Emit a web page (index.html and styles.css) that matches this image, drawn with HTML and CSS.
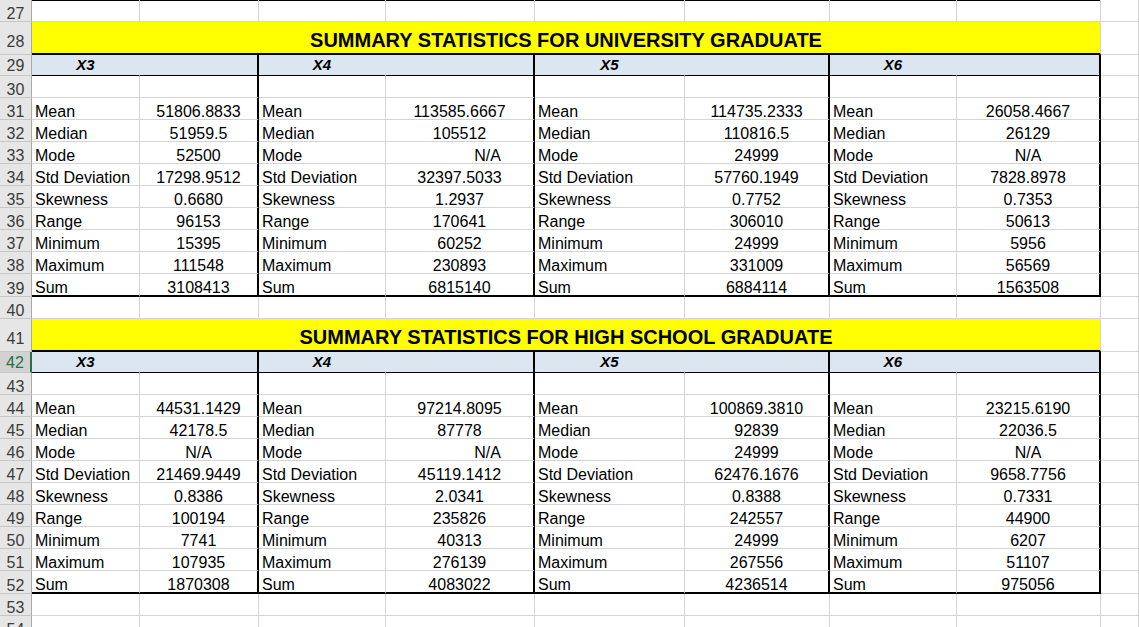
FILE: index.html
```html
<!DOCTYPE html>
<html>
<head>
<meta charset="utf-8">
<title>Summary Statistics</title>
<link rel="stylesheet" href="styles.css">
</head>
<body>
<div class="sheet">
  <div class="row top"><div class="rh">27</div><div class="c"></div><div class="c"></div><div class="c"></div><div class="c"></div><div class="c"></div><div class="c"></div><div class="c"></div><div class="c"></div><div class="x"></div></div>
  <div class="row tall"><div class="rh">28</div><div class="tt">SUMMARY STATISTICS FOR UNIVERSITY GRADUATE</div><div class="x"></div></div>
  <div class="row hd"><div class="rh">29</div><div class="xl">X3</div><div class="g"></div><div class="xl">X4</div><div class="g"></div><div class="xl">X5</div><div class="g"></div><div class="xl">X6</div><div class="g"></div><div class="x"></div></div>
  <div class="row"><div class="rh">30</div><div class="c"></div><div class="c g"></div><div class="c"></div><div class="c g"></div><div class="c"></div><div class="c g"></div><div class="c"></div><div class="c g"></div><div class="x"></div></div>
  <div class="row"><div class="rh">31</div><div class="lb">Mean</div><div class="v g">51806.8833</div><div class="lb">Mean</div><div class="v g">113585.6667</div><div class="lb">Mean</div><div class="v g">114735.2333</div><div class="lb">Mean</div><div class="v g">26058.4667</div><div class="x"></div></div>
  <div class="row"><div class="rh">32</div><div class="lb">Median</div><div class="v g">51959.5</div><div class="lb">Median</div><div class="v g">105512</div><div class="lb">Median</div><div class="v g">110816.5</div><div class="lb">Median</div><div class="v g">26129</div><div class="x"></div></div>
  <div class="row"><div class="rh">33</div><div class="lb">Mode</div><div class="v g">52500</div><div class="lb">Mode</div><div class="v g na4">N/A</div><div class="lb">Mode</div><div class="v g">24999</div><div class="lb">Mode</div><div class="v g">N/A</div><div class="x"></div></div>
  <div class="row"><div class="rh">34</div><div class="lb">Std Deviation</div><div class="v g">17298.9512</div><div class="lb">Std Deviation</div><div class="v g">32397.5033</div><div class="lb">Std Deviation</div><div class="v g">57760.1949</div><div class="lb">Std Deviation</div><div class="v g">7828.8978</div><div class="x"></div></div>
  <div class="row"><div class="rh">35</div><div class="lb">Skewness</div><div class="v g">0.6680</div><div class="lb">Skewness</div><div class="v g">1.2937</div><div class="lb">Skewness</div><div class="v g">0.7752</div><div class="lb">Skewness</div><div class="v g">0.7353</div><div class="x"></div></div>
  <div class="row"><div class="rh">36</div><div class="lb">Range</div><div class="v g">96153</div><div class="lb">Range</div><div class="v g">170641</div><div class="lb">Range</div><div class="v g">306010</div><div class="lb">Range</div><div class="v g">50613</div><div class="x"></div></div>
  <div class="row"><div class="rh">37</div><div class="lb">Minimum</div><div class="v g">15395</div><div class="lb">Minimum</div><div class="v g">60252</div><div class="lb">Minimum</div><div class="v g">24999</div><div class="lb">Minimum</div><div class="v g">5956</div><div class="x"></div></div>
  <div class="row"><div class="rh">38</div><div class="lb">Maximum</div><div class="v g">111548</div><div class="lb">Maximum</div><div class="v g">230893</div><div class="lb">Maximum</div><div class="v g">331009</div><div class="lb">Maximum</div><div class="v g">56569</div><div class="x"></div></div>
  <div class="row end"><div class="rh">39</div><div class="lb">Sum</div><div class="v g">3108413</div><div class="lb">Sum</div><div class="v g">6815140</div><div class="lb">Sum</div><div class="v g">6884114</div><div class="lb">Sum</div><div class="v g">1563508</div><div class="x"></div></div>
  <div class="row"><div class="rh">40</div><div class="c"></div><div class="c"></div><div class="c"></div><div class="c"></div><div class="c"></div><div class="c"></div><div class="c"></div><div class="c"></div><div class="x"></div></div>
  <div class="row tall"><div class="rh">41</div><div class="tt">SUMMARY STATISTICS FOR HIGH SCHOOL GRADUATE</div><div class="x"></div></div>
  <div class="row hd"><div class="rh sel">42</div><div class="xl">X3</div><div class="g"></div><div class="xl">X4</div><div class="g"></div><div class="xl">X5</div><div class="g"></div><div class="xl">X6</div><div class="g"></div><div class="x"></div></div>
  <div class="row"><div class="rh">43</div><div class="c"></div><div class="c g"></div><div class="c"></div><div class="c g"></div><div class="c"></div><div class="c g"></div><div class="c"></div><div class="c g"></div><div class="x"></div></div>
  <div class="row"><div class="rh">44</div><div class="lb">Mean</div><div class="v g">44531.1429</div><div class="lb">Mean</div><div class="v g">97214.8095</div><div class="lb">Mean</div><div class="v g">100869.3810</div><div class="lb">Mean</div><div class="v g">23215.6190</div><div class="x"></div></div>
  <div class="row"><div class="rh">45</div><div class="lb">Median</div><div class="v g">42178.5</div><div class="lb">Median</div><div class="v g">87778</div><div class="lb">Median</div><div class="v g">92839</div><div class="lb">Median</div><div class="v g">22036.5</div><div class="x"></div></div>
  <div class="row"><div class="rh">46</div><div class="lb">Mode</div><div class="v g">N/A</div><div class="lb">Mode</div><div class="v g na4">N/A</div><div class="lb">Mode</div><div class="v g">24999</div><div class="lb">Mode</div><div class="v g">N/A</div><div class="x"></div></div>
  <div class="row"><div class="rh">47</div><div class="lb">Std Deviation</div><div class="v g">21469.9449</div><div class="lb">Std Deviation</div><div class="v g">45119.1412</div><div class="lb">Std Deviation</div><div class="v g">62476.1676</div><div class="lb">Std Deviation</div><div class="v g">9658.7756</div><div class="x"></div></div>
  <div class="row"><div class="rh">48</div><div class="lb">Skewness</div><div class="v g">0.8386</div><div class="lb">Skewness</div><div class="v g">2.0341</div><div class="lb">Skewness</div><div class="v g">0.8388</div><div class="lb">Skewness</div><div class="v g">0.7331</div><div class="x"></div></div>
  <div class="row"><div class="rh">49</div><div class="lb">Range</div><div class="v g">100194</div><div class="lb">Range</div><div class="v g">235826</div><div class="lb">Range</div><div class="v g">242557</div><div class="lb">Range</div><div class="v g">44900</div><div class="x"></div></div>
  <div class="row"><div class="rh">50</div><div class="lb">Minimum</div><div class="v g">7741</div><div class="lb">Minimum</div><div class="v g">40313</div><div class="lb">Minimum</div><div class="v g">24999</div><div class="lb">Minimum</div><div class="v g">6207</div><div class="x"></div></div>
  <div class="row"><div class="rh">51</div><div class="lb">Maximum</div><div class="v g">107935</div><div class="lb">Maximum</div><div class="v g">276139</div><div class="lb">Maximum</div><div class="v g">267556</div><div class="lb">Maximum</div><div class="v g">51107</div><div class="x"></div></div>
  <div class="row end"><div class="rh">52</div><div class="lb">Sum</div><div class="v g">1870308</div><div class="lb">Sum</div><div class="v g">4083022</div><div class="lb">Sum</div><div class="v g">4236514</div><div class="lb">Sum</div><div class="v g">975056</div><div class="x"></div></div>
  <div class="row"><div class="rh">53</div><div class="c"></div><div class="c"></div><div class="c"></div><div class="c"></div><div class="c"></div><div class="c"></div><div class="c"></div><div class="c"></div><div class="x"></div></div>
  <div class="row"><div class="rh">54</div><div class="c"></div><div class="c"></div><div class="c"></div><div class="c"></div><div class="c"></div><div class="c"></div><div class="c"></div><div class="c"></div><div class="x"></div></div>
</div>
</body>
</html>
```

FILE: styles.css
```css
html, body {
  margin: 0;
  padding: 0;
  background: #ffffff;
  overflow: hidden;
}

.sheet {
  font-family: "Liberation Sans", Arial, sans-serif;
  font-size: 16px;
  color: #000000;
  width: 1139px;
}

.row {
  display: grid;
  grid-template-columns: 32px 108px 119px 127px 149px 150px 145px 127px 144px 1fr;
  height: 22px;
}

.row > div {
  box-sizing: border-box;
  border-right: 1px solid #d4d4d4;
  border-bottom: 1px solid #d4d4d4;
  display: flex;
  align-items: flex-end;
  line-height: 15px;
  white-space: nowrap;
}

.row.tall { height: 33px; }
.row.hd { height: 21px; }
.row.end { height: 23px; }

.row > .rh {
  background: #e6e6e6;
  border-right: 1px solid #a9a9a9;
  border-bottom: 1px solid #c6c6c6;
  justify-content: center;
  color: #3c3c3c;
  overflow: hidden;
}

.tall > .rh {
  padding-bottom: 5px;
}

.row > .rh.sel {
  background: #d2d2d2;
  color: #217346;
  border-right: 2px solid #217346;
}

.top > .c {
  box-shadow: inset 0 1px 0 #000000;
}

.row > .tt {
  grid-column: 2 / 10;
  background: #ffff00;
  border-bottom: 2px solid #000000;
  justify-content: center;
  font-weight: bold;
  font-size: 20px;
  line-height: 25px;
}

.hd > div {
  background: #dce6f1;
  border-right-color: #dce6f1;
  border-bottom: 1px solid #000000;
  align-items: center;
}

.hd > .x {
  background: #ffffff;
  border-right-color: #d4d4d4;
  border-bottom-color: #d4d4d4;
}

.row > .g {
  border-right: 2px solid #000000;
}

.row > .xl {
  justify-content: center;
  font-weight: bold;
  font-style: italic;
  font-size: 15px;
  line-height: 18px;
}

.row > .lb {
  padding-left: 3px;
}

.row > .v {
  justify-content: center;
}

.row > .na4 {
  padding-left: 56px;
}

.end > .lb,
.end > .v {
  border-bottom: 2px solid #000000;
}
```
